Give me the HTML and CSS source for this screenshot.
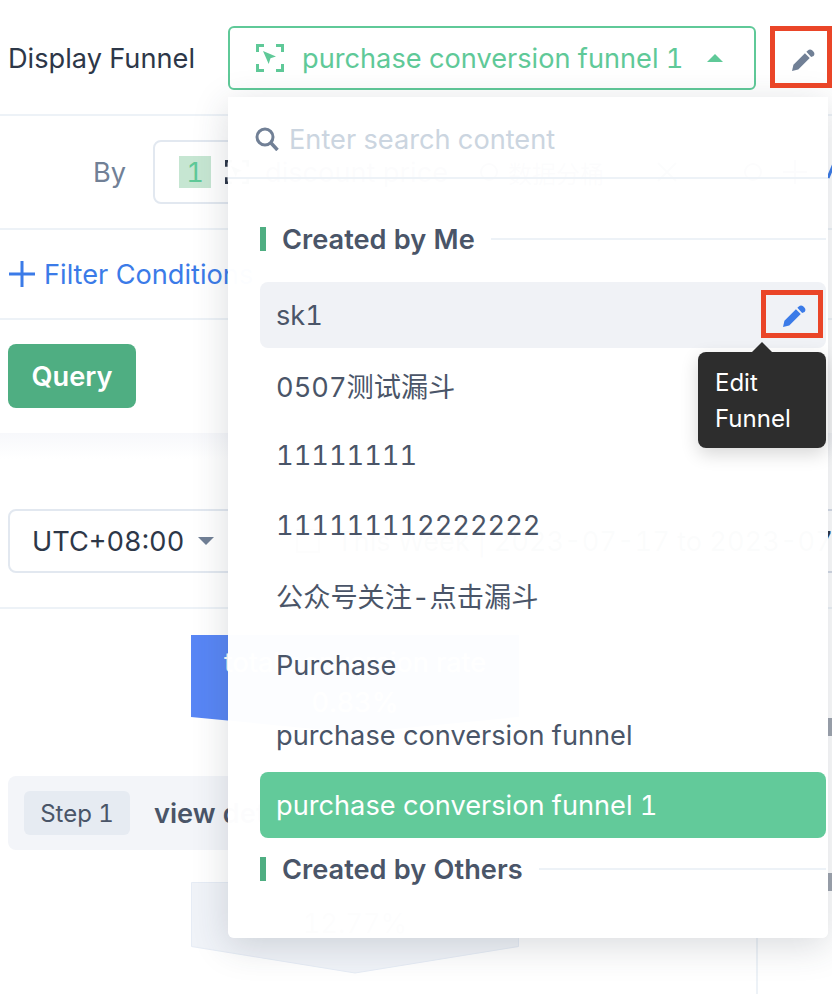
FILE: index.html
```html
<!DOCTYPE html>
<html lang="en">
<head>
<meta charset="utf-8">
<title>Display Funnel</title>
<link rel="stylesheet" href="styles.css">
</head>
<body>
<div class="page">
  <section class="top-row">
    <span class="label">Display Funnel</span>
    <div class="funnel-select">
      <svg class="scan-icon" viewBox="0 0 28 28"><path d="M1.500 8V1.500H8M20 1.500h6.500V8M1.500 20v6.500H8M20 26.500h6.500V20" fill="none" stroke="#5fc998" stroke-width="3"/><path d="M7 7l13 5.500-5.500 1.800-1.800 5.700z" fill="#5fc998"/></svg>
      <span class="select-text">purchase conversion funnel 1</span>
      <span class="caret-up"></span>
    </div>
    <svg class="pencil top-pencil" viewBox="0 0 24 24"><path d="M0 24l1.500-6.500 12-12 5 5-12 12z" fill="#718096"/><path d="M15 4l1.500-1.500c1.300-1.300 3.200-1.300 4.500-.2l1.500 1.500c1.200 1.300 1.200 3.200 0 4.500L20 9.500z" fill="#718096"/></svg>
  </section>

  <section class="by-row">
    <span class="by-label">By</span>
    <div class="by-box">
      <span class="badge">1</span>
      <svg class="by-scan" viewBox="0 0 28 28"><path d="M1.500 8V1.500H8M20 1.500h6.500V8M1.500 20v6.500H8M20 26.500h6.500V20" fill="none" stroke="#2d3748" stroke-width="3"/><path d="M7 7l13 5.500-5.500 1.800-1.800 5.700z" fill="#2d3748"/></svg>
      <span class="by-text">discount price</span>
      <svg class="by-circle" viewBox="0 0 18 18"><circle cx="9" cy="9" r="8" fill="none" stroke="#4a5568" stroke-width="2"/></svg>
      <span class="by-text bucket">数据分桶</span>
      <svg class="by-x" viewBox="0 0 20 20"><path d="M1 1l18 18M19 1L1 19" stroke="#4a5568" stroke-width="2"/></svg>
      <svg class="by-circle second" viewBox="0 0 18 18"><circle cx="9" cy="9" r="8" fill="none" stroke="#4a5568" stroke-width="2"/></svg>
      <svg class="by-add" viewBox="0 0 24 24"><path d="M12 0v24M0 12h24" stroke="#4a5568" stroke-width="2"/></svg>
    </div>
    <svg class="by-more" viewBox="0 0 8 16"><path d="M0 14L5 2l3 8" fill="none" stroke="#3b7be8" stroke-width="3"/></svg>
  </section>

  <section class="filter-row">
    <svg class="plus" viewBox="0 0 26 26"><path d="M13 0v26M0 13h26" stroke="#3b7be8" stroke-width="3"/></svg>
    <span class="filter-text">Filter Conditions</span>
  </section>

  <section class="query-row">
    <button class="query-btn">Query</button>
  </section>

  <section class="toolbar">
    <div class="tz-select"><span>UTC+08:00</span><span class="caret-down"></span></div>
    <div class="date-box"><span class="cal"></span><span class="date-text">This Week | 2023-07-17 to 2023-07-17</span></div>
  </section>

  <section class="chart">
    <div class="funnel-shape blue">
      <svg viewBox="0 0 328 98" width="328" height="98"><path d="M0 0h328v82l-164 16L0 82z" fill="#5886f5"/></svg>
      <div class="funnel-label">total conversion rate<br>0.83%</div>
    </div>
    <div class="step-bar">
      <span class="step-tag">Step 1</span>
      <span class="step-name">view detail page o...</span>
      <span class="step-count"><u>17,420</u> people</span>
    </div>
    <div class="funnel-shape pale">
      <svg viewBox="0 0 328 92" width="328" height="92"><path d="M.5.500h327v64L164 91 .5 64.500z" fill="#f0f3f8" stroke="#e6ecf5"/></svg>
      <div class="funnel-label dim">12.77%</div>
    </div>
  </section>
  <div class="side-rule"></div>
  <div class="tick tick-a"></div>
  <div class="tick tick-b"></div>

  <div class="dropdown">
    <div class="search">
      <svg class="search-icon" viewBox="0 0 24 24"><circle cx="10" cy="10" r="8" fill="none" stroke="#718096" stroke-width="3"/><path d="M16 16l6.500 7" stroke="#718096" stroke-width="3.500"/></svg>
      <span class="placeholder">Enter search content</span>
    </div>
    <div class="group-head first"><i></i><b>Created by Me</b><em></em></div>
    <ul class="list">
      <li class="hover">sk1
        <svg class="pencil item-pencil" viewBox="0 0 24 24"><path d="M0 24l1.500-6.500 12-12 5 5-12 12z" fill="#3b7be8"/><path d="M15 4l1.500-1.500c1.300-1.300 3.200-1.300 4.500-.2l1.500 1.500c1.200 1.300 1.200 3.200 0 4.500L20 9.500z" fill="#3b7be8"/></svg>
      </li>
      <li>0507测试漏斗</li>
      <li>11111111</li>
      <li>111111112222222</li>
      <li>公众号关注-点击漏斗</li>
      <li>Purchase</li>
      <li>purchase conversion funnel</li>
      <li class="selected">purchase conversion funnel 1</li>
    </ul>
    <div class="group-head"><i></i><b>Created by Others</b><em></em></div>
  </div>

  <div class="tooltip">Edit<br>Funnel</div>
  <div class="mark mark-top"></div>
  <div class="mark mark-item"></div>
</div>
</body>
</html>
```
FILE: styles.css
```css
* { box-sizing: border-box; }
html, body { margin: 0; padding: 0; background: #fff; }
body { font-family: Inter, "Noto Sans CJK SC", sans-serif; font-size: 27.2px; font-feature-settings: "tnum"; color: #2d3748; overflow: hidden; }
.page { position: relative; width: 832px; height: 994px; overflow: hidden; }

.top-row { height: 116px; border-bottom: 2px solid #edf2f7; display: flex; align-items: flex-start; padding: 26px 0 0 8px; }
.label { width: 220px; line-height: 66px; color: #2d3748; }
.funnel-select { width: 528px; height: 64px; border: 2px solid #5fc998; border-radius: 6px; display: flex; align-items: center; padding-left: 26px; color: #5fc998; }
.scan-icon { width: 28px; height: 28px; flex: none; }
.select-text { margin-left: 18px; white-space: nowrap; }
.caret-up { width: 0; height: 0; border: 8px solid transparent; border-top: 0; border-bottom-color: #5fc998; margin-left: 24px; }
.pencil { display: block; }
.top-pencil { width: 23px; height: 23px; margin: 22px 0 0 36px; }

.by-row { height: 114px; border-bottom: 2px solid #edf2f7; display: flex; align-items: center; padding-left: 93px; }
.by-label { width: 60px; flex: none; color: #718096; }
.by-box { width: 664px; height: 64px; border: 2px solid #e2e8f0; border-radius: 8px; display: flex; align-items: center; padding-left: 24px; flex: none; }
.badge { width: 32px; height: 32px; background: #c6e6d2; color: #5fc998; display: flex; align-items: center; justify-content: center; flex: none; }
.by-scan { width: 24px; height: 24px; margin-left: 14px; flex: none; }
.by-text { margin-left: 16px; color: #4a5568; white-space: nowrap; }
.by-circle { width: 18px; height: 18px; margin-left: 32px; flex: none; }
.bucket { margin-left: 10px; font-size: 24px; }
.by-x { width: 20px; height: 20px; margin-left: 53px; flex: none; }
.by-circle.second { margin-left: 67px; }
.by-add { width: 24px; height: 24px; margin-left: 21px; flex: none; }
.by-more { width: 8px; height: 16px; margin-left: 11px; flex: none; }

.filter-row { height: 90px; border-bottom: 2px solid #edf2f7; display: flex; align-items: center; padding-left: 9px; }
.plus { width: 26px; height: 26px; flex: none; }
.filter-text { margin-left: 9px; color: #3b7be8; }

.query-row { height: 113px; padding: 24px 0 0 8px; }
.query-btn { display: block; width: 128px; height: 64px; border: 0; border-radius: 8px; background: #4fae82; color: #fff; font: 600 27.2px Inter, sans-serif; }

.toolbar { height: 176px; border-bottom: 2px solid #edf2f7; padding: 76px 0 0 8px; display: flex; background: linear-gradient(#f7f8fb, #fff 26px); }
.tz-select { width: 230px; height: 64px; border: 2px solid #e2e8f0; border-radius: 8px; display: flex; align-items: center; padding-left: 22px; flex: none; background: #fff; }
.caret-down { width: 0; height: 0; border: 8px solid transparent; border-bottom: 0; border-top-color: #718096; margin-left: 14px; }
.date-box { width: 600px; height: 64px; flex: none; border: 2px solid #d5dbe6; border-radius: 8px; margin-left: 8px; display: flex; align-items: center; padding-left: 48px; gap: 16px; white-space: nowrap; }
.cal { width: 24px; height: 24px; border: 2px solid #718096; flex: none; }
.date-text { color: #2d3748; }

.chart { padding: 26px 0 0 8px; width: 749px; }
.funnel-shape { position: relative; width: 328px; margin-left: 183px; }
.funnel-shape svg { display: block; }
.funnel-label { position: absolute; inset: 8px 0 auto; text-align: center; color: #fff; line-height: 40px; }
.funnel-label.dim { top: 22px; color: #718096; }
.step-bar { margin-top: 43px; height: 74px; background: #f3f5f9; border-radius: 8px; display: flex; align-items: center; padding-left: 16px; width: 730px; }
.step-tag { width: 106px; height: 44px; background: #e6ebf2; border-radius: 6px; color: #4a5568; font-size: 24px; display: flex; align-items: center; justify-content: center; flex: none; }
.step-name { margin-left: 24px; width: 341px; overflow: hidden; flex: none; font-weight: 600; color: #4a5568; white-space: nowrap; }
.step-count { color: #4a5568; white-space: nowrap; }
.step-bar + .funnel-shape { margin-top: 32px; }
.side-rule { position: absolute; left: 756px; top: 608px; bottom: 0; width: 2px; background: #edf2f7; }
.tick { position: absolute; left: 828px; width: 4px; height: 18px; background: #a0a6b0; }
.tick-a { top: 718px; }
.tick-b { top: 873px; }

.dropdown { position: absolute; left: 228px; top: 97px; width: 600px; height: 841px; background: rgba(255,255,255,.985); border-radius: 0 0 6px 6px; box-shadow: 0 8px 36px rgba(45,55,72,.18); padding: 0 2px 0 32px; }
.search { height: 82px; margin: 0 -2px 0 -32px; border-bottom: 2px solid #edf2f7; display: flex; align-items: center; padding: 3px 0 0 27px; }
.search-icon { width: 24px; height: 24px; flex: none; }
.placeholder { margin: 2px 0 0 10px; color: #cbd5e0; }
.group-head { display: flex; align-items: center; height: 24px; }
.group-head.first { margin-top: 48px; }
.group-head i { width: 6px; height: 24px; background: #4fae82; flex: none; }
.group-head b { margin-left: 16px; font-weight: 600; color: #4a5568; white-space: nowrap; }
.group-head em { flex: 1; height: 2px; background: #edf2f7; margin-left: 16px; }
.list { list-style: none; margin: 31px 0 19px; padding: 0; display: flex; flex-direction: column; gap: 4px; }
.list li { height: 66px; border-radius: 8px; padding-left: 16px; display: flex; align-items: center; justify-content: space-between; color: #4a5568; white-space: nowrap; }
.list li.hover { background: #f0f2f6; }
.list li.selected { background: rgba(95,201,152,.985); color: #fff; }
.item-pencil { width: 23px; height: 23px; margin-right: 20px; }

.tooltip { position: absolute; left: 698px; top: 352px; width: 128px; height: 96px; background: #2d2d2d; color: #fff; border-radius: 8px; padding: 13px 0 0 17px; font-size: 24px; line-height: 36px; box-shadow: 0 6px 18px rgba(0,0,0,.16); }
.tooltip::before { content: ""; position: absolute; left: 54px; top: -10px; border: 10px solid transparent; border-top: 0; border-bottom-color: #2d2d2d; }
.mark { position: absolute; border: 5px solid #ea4528; }
.mark-top { left: 770px; top: 26px; width: 62px; height: 62px; }
.mark-item { left: 761px; top: 290px; width: 62px; height: 48px; }
```
